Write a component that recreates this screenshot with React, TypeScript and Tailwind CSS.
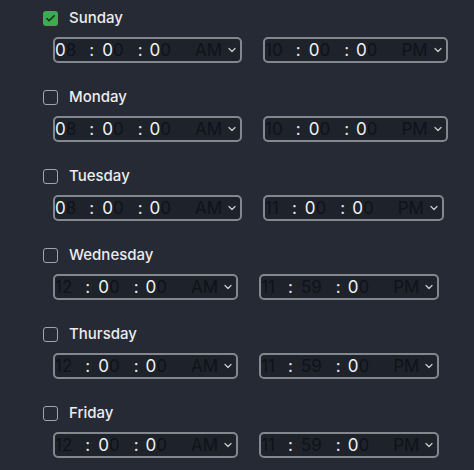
import { Check, ChevronDown } from "lucide-react";

// each segment: [text, bright mask] — "1" = light digit, "0" = dim digit
type Seg = [string, string];

interface TimeValue {
  h: Seg;
  m: Seg;
  s: Seg;
  ampm: string;
}

interface Day {
  name: string;
  checked: boolean;
  from: TimeValue;
  to: TimeValue;
}

const morning: TimeValue = { h: ["08", "10"], m: ["00", "10"], s: ["00", "10"], ampm: "AM" };
const midnight: TimeValue = { h: ["12", "00"], m: ["00", "10"], s: ["00", "10"], ampm: "AM" };
const tenPm: TimeValue = { h: ["10", "00"], m: ["00", "10"], s: ["00", "10"], ampm: "PM" };
const elevenPm: TimeValue = { h: ["11", "00"], m: ["00", "10"], s: ["00", "10"], ampm: "PM" };
const lastMinute: TimeValue = { h: ["11", "00"], m: ["59", "00"], s: ["00", "10"], ampm: "PM" };

const days: Day[] = [
  { name: "Sunday", checked: true, from: morning, to: tenPm },
  { name: "Monday", checked: false, from: morning, to: tenPm },
  { name: "Tuesday", checked: false, from: morning, to: elevenPm },
  { name: "Wednesday", checked: false, from: midnight, to: lastMinute },
  { name: "Thursday", checked: false, from: midnight, to: lastMinute },
  { name: "Friday", checked: false, from: midnight, to: lastMinute },
];

function Digits({ seg }: { seg: Seg }) {
  const [text, mask] = seg;
  return (
    <span>
      {text.split("").map((c, i) => (
        <span key={i} className={mask[i] === "1" ? "text-[#f2f2f3]" : "text-[#0f131a]"}>
          {c}
        </span>
      ))}
    </span>
  );
}

function TimeInput({ value }: { value: TimeValue }) {
  return (
    <div className="flex items-center h-[26px] border-2 border-[#85878e] rounded-[5px] bg-[#1e222b] pr-[2px] text-[17px] leading-none">
      <Digits seg={value.h} />
      <span className="ml-[13px] mr-[8px] text-[#e4e5e7]">:</span>
      <Digits seg={value.m} />
      <span className="ml-[14px] mr-[7px] text-[#e4e5e7]">:</span>
      <Digits seg={value.s} />
      <span className="ml-[24px] text-[#0f131a]">{value.ampm}</span>
      <ChevronDown size={12} strokeWidth={2.5} className="ml-[4px] text-[#c9cacd]" />
    </div>
  );
}

function DayRow({ day }: { day: Day }) {
  return (
    <div className="flex flex-col">
      <label className="flex items-center h-6 gap-[11px]">
        {day.checked ? (
          <span className="flex items-center justify-center w-[15px] h-[15px] rounded-[3px] bg-[#3dac4e]">
            <Check size={11} strokeWidth={3.5} className="text-[#15301a]" />
          </span>
        ) : (
          <span className="w-[15px] h-[15px] rounded-[3px] border-[1.5px] border-[#a2a4aa]" />
        )}
        <span className="text-[15px] text-[#ececee] font-medium">{day.name}</span>
      </label>
      <div className="flex gap-[21px] ml-[10px] mt-[7px]">
        <TimeInput value={day.from} />
        <TimeInput value={day.to} />
      </div>
    </div>
  );
}

export default function App() {
  return (
    <div
      className="w-[474px] h-[470px] overflow-hidden bg-[#252a35] pt-[6px] pl-[43px] flex flex-col gap-[22px]"
      style={{ fontFamily: "Inter, 'Noto Sans', sans-serif" }}
    >
      {days.map((d) => (
        <DayRow key={d.name} day={d} />
      ))}
    </div>
  );
}
